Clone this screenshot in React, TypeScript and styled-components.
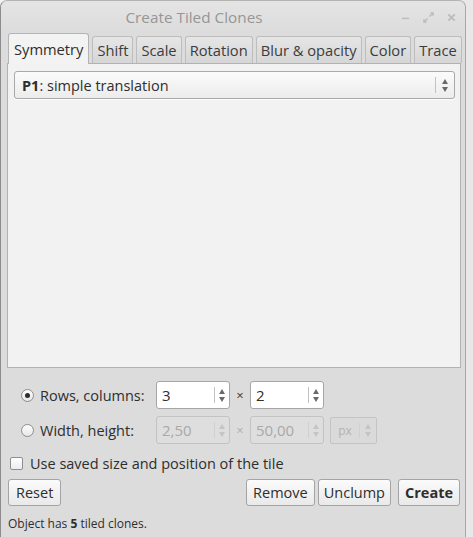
import styled, { createGlobalStyle, css } from "styled-components";

const GlobalStyle = createGlobalStyle`
  html, body {
    margin: 0;
    padding: 0;
    background: #f2f2f2;
  }
  body {
    font-family: "Open Sans", "DejaVu Sans", sans-serif;
    font-size: 14px;
    color: #2e3436;
  }
`;

const Screen = styled.div`
  width: 473px;
  height: 537px;
  overflow: hidden;
  display: flex;
  background: linear-gradient(to right, #f4f4f4, #e8e8e8);
`;

const Window = styled.div`
  width: 466px;
  height: 537px;
  flex: none;
  display: flex;
  flex-direction: column;
  background: #dcdcdc;
  border-left: 1px solid #8c8c8c;
  border-right: 1px solid #a8a8a8;
  border-top: 1px solid #b4b4b4;
  border-radius: 7px 7px 0 0;
  box-sizing: border-box;
`;

const TitleBar = styled.div`
  height: 32px;
  flex: none;
  display: grid;
  grid-template-columns: 1fr auto 1fr;
  align-items: center;
  background: linear-gradient(#e4e4e4, #dcdcdc);
  border-radius: 7px 7px 0 0;
`;

const Title = styled.div`
  grid-column: 2;
  font-size: 15.3px;
  color: #969696;
  margin-right: 78px;
`;

const Controls = styled.div`
  grid-column: 3;
  justify-self: end;
  display: flex;
  align-items: center;
  gap: 12px;
  padding-right: 8px;
`;

const Ctl = styled.svg`
  width: 11px;
  height: 11px;
  stroke: #bcbcbc;
  stroke-width: 1.5;
  fill: none;
`;

const TabStrip = styled.div`
  display: flex;
  align-items: flex-end;
  gap: 3px;
  padding-left: 7px;
  height: 30px;
  flex: none;
  position: relative;
  z-index: 1;
`;

const Tab = styled.div<{ $active?: boolean }>`
  height: 27px;
  padding: 0 4px;
  flex: none;
  white-space: nowrap;
  display: flex;
  align-items: center;
  font-size: 14.7px;
  color: #3c3c3c;
  box-sizing: border-box;
  border: 1px solid #bdbdbd;
  border-bottom: none;
  border-radius: 3px 3px 0 0;
  background: linear-gradient(#e6e6e6, #d6d6d6);
  ${(p) =>
    p.$active &&
    css`
      height: 31px;
      padding: 0 5px;
      margin-bottom: -1px;
      background: #f3f3f3;
      color: #2e2e2e;
      border-color: #b4b4b4;
    `}
`;

const Page = styled.div`
  margin: 0 4px 0 6px;
  height: 305px;
  flex: none;
  box-sizing: border-box;
  background: #f2f2f2;
  border: 1px solid #b2b2b2;
  padding: 7px 5px 0 6px;
`;

const Combo = styled.div`
  height: 28px;
  box-sizing: border-box;
  display: flex;
  align-items: center;
  border: 1px solid #a9a9a9;
  border-radius: 3px;
  background: linear-gradient(#fbfbfb, #ececec);
  box-shadow: 0 1px 0 rgba(255, 255, 255, 0.8);
  padding-left: 7px;
  font-size: 14.5px;
  color: #2e2e2e;
`;

const ComboText = styled.div`
  flex: 1;
  b {
    font-weight: 700;
  }
`;

const ArrowBox = styled.div<{ $w: number; $dim?: boolean }>`
  width: ${(p) => p.$w}px;
  align-self: stretch;
  display: flex;
  flex-direction: column;
  align-items: center;
  justify-content: center;
  gap: 3px;
  position: relative;
  &::before {
    content: "";
    position: absolute;
    left: 0;
    top: 5px;
    bottom: 5px;
    width: 1px;
    background: ${(p) => (p.$dim ? "#d0d0d0" : "#c2c2c2")};
  }
`;

const Tri = styled.span<{ $down?: boolean; $dim?: boolean }>`
  width: 0;
  height: 0;
  border-left: 3.5px solid transparent;
  border-right: 3.5px solid transparent;
  ${(p) =>
    p.$down
      ? css`border-top: 5px solid ${p.$dim ? "#c4c4c4" : "#6a6a6a"};`
      : css`border-bottom: 5px solid ${p.$dim ? "#c4c4c4" : "#6a6a6a"};`}
`;

const Body = styled.div`
  flex: 1;
  display: flex;
  flex-direction: column;
  padding: 13px 5px 0 6px;
`;

const Grid = styled.div`
  display: grid;
  grid-template-columns: 135px 74px 20px 74px auto;
  row-gap: 7px;
  align-items: center;
  padding-left: 14px;
`;

const RadioLabel = styled.label`
  display: flex;
  align-items: center;
  gap: 6px;
  font-size: 14.5px;
  color: #2e2e2e;
  white-space: nowrap;
`;

const Radio = styled.span<{ $on?: boolean }>`
  width: 13px;
  height: 13px;
  flex: none;
  box-sizing: border-box;
  border-radius: 50%;
  border: 1px solid #8e8e8e;
  background: linear-gradient(#ffffff, #e6e6e6);
  display: flex;
  align-items: center;
  justify-content: center;
  &::after {
    content: "";
    width: 5px;
    height: 5px;
    border-radius: 50%;
    background: ${(p) => (p.$on ? "#2e2e2e" : "transparent")};
  }
`;

const Spin = styled.div<{ $dim?: boolean }>`
  height: 28px;
  box-sizing: border-box;
  display: flex;
  border: 1px solid ${(p) => (p.$dim ? "#c3c3c3" : "#a6a6a6")};
  border-radius: 3px;
  background: ${(p) => (p.$dim ? "#dedede" : "#ffffff")};
  font-size: 15px;
  color: ${(p) => (p.$dim ? "#a9a9a9" : "#2e2e2e")};
`;

const SpinValue = styled.div`
  flex: 1;
  display: flex;
  align-items: center;
  padding-left: 5px;
`;

const Times = styled.span<{ $dim?: boolean }>`
  text-align: center;
  font-size: 13px;
  color: ${(p) => (p.$dim ? "#b0b0b0" : "#3a3a3a")};
`;

const Unit = styled.div`
  margin-left: 6px;
  width: 47px;
  height: 27px;
  box-sizing: border-box;
  display: flex;
  border: 1px solid #c4c4c4;
  border-radius: 2px;
  background: #dadada;
  font-size: 12px;
  color: #b3b3b3;
`;

const UnitText = styled.div`
  flex: 1;
  display: flex;
  align-items: center;
  justify-content: center;
`;

const CheckRow = styled.label`
  margin-top: 10px;
  display: flex;
  align-items: center;
  gap: 7px;
  padding-left: 3px;
  font-size: 14.5px;
  color: #2e2e2e;
`;

const Check = styled.span`
  width: 13px;
  height: 13px;
  box-sizing: border-box;
  border: 1px solid #8e8e8e;
  border-radius: 2px;
  background: linear-gradient(#ffffff, #ececec);
`;

const ButtonRow = styled.div`
  margin-top: 6px;
  display: flex;
  gap: 3px;
  padding-left: 1px;
`;

const Button = styled.button<{ $strong?: boolean; $push?: boolean }>`
  height: 27px;
  padding: 0 5px;
  font-family: inherit;
  font-size: 14.5px;
  font-weight: ${(p) => (p.$strong ? 700 : 400)};
  color: #2e2e2e;
  border: 1px solid #a4a4a4;
  border-radius: 3px;
  background: linear-gradient(#fbfbfb, #e9e9e9);
  ${(p) => p.$push && "margin-left: auto; padding: 0 6px;"}
  &:first-child {
    padding: 0 7px;
  }
  &:last-child {
    margin-left: 4px;
    padding: 0 6px;
  }
`;

const Status = styled.div`
  margin-top: 9px;
  font-size: 12px;
  color: #2e2e2e;
  padding-left: 1px;
  b {
    font-weight: 700;
  }
`;

function Arrows({ w, dim }: { w: number; dim?: boolean }) {
  return (
    <ArrowBox $w={w} $dim={dim}>
      <Tri $dim={dim} />
      <Tri $down $dim={dim} />
    </ArrowBox>
  );
}

function SpinField({ value, dim }: { value: string; dim?: boolean }) {
  return (
    <Spin $dim={dim}>
      <SpinValue>{value}</SpinValue>
      <Arrows w={15} dim={dim} />
    </Spin>
  );
}

const tabs = ["Symmetry", "Shift", "Scale", "Rotation", "Blur & opacity", "Color", "Trace"];

export default function App() {
  return (
    <>
      <GlobalStyle />
      <Screen>
        <Window>
          <TitleBar>
            <Title>Create Tiled Clones</Title>
            <Controls>
              <Ctl viewBox="0 0 12 12">
                <path d="M2 7h8" />
              </Ctl>
              <Ctl viewBox="0 0 12 12">
                <path d="M7 5l4-4M8 1h3v3M5 7l-4 4M1 8v3h3" />
              </Ctl>
              <Ctl viewBox="0 0 12 12">
                <path d="M2.5 2.5l7 7M9.5 2.5l-7 7" strokeWidth={2} />
              </Ctl>
            </Controls>
          </TitleBar>
          <TabStrip>
            {tabs.map((t, i) => (
              <Tab key={t} $active={i === 0}>
                {t}
              </Tab>
            ))}
          </TabStrip>
          <Page>
            <Combo>
              <ComboText>
                <b>P1</b>: simple translation
              </ComboText>
              <Arrows w={19} />
            </Combo>
          </Page>
          <Body>
            <Grid>
              <RadioLabel>
                <Radio $on />
                Rows, columns:
              </RadioLabel>
              <SpinField value="3" />
              <Times>×</Times>
              <SpinField value="2" />
              <span />
              <RadioLabel>
                <Radio />
                Width, height:
              </RadioLabel>
              <SpinField value="2,50" dim />
              <Times $dim>×</Times>
              <SpinField value="50,00" dim />
              <Unit>
                <UnitText>px</UnitText>
                <Arrows w={17} dim />
              </Unit>
            </Grid>
            <CheckRow>
              <Check />
              Use saved size and position of the tile
            </CheckRow>
            <ButtonRow>
              <Button>Reset</Button>
              <Button $push>Remove</Button>
              <Button>Unclump</Button>
              <Button $strong>Create</Button>
            </ButtonRow>
            <Status>
              Object has <b>5</b> tiled clones.
            </Status>
          </Body>
        </Window>
      </Screen>
    </>
  );
}
